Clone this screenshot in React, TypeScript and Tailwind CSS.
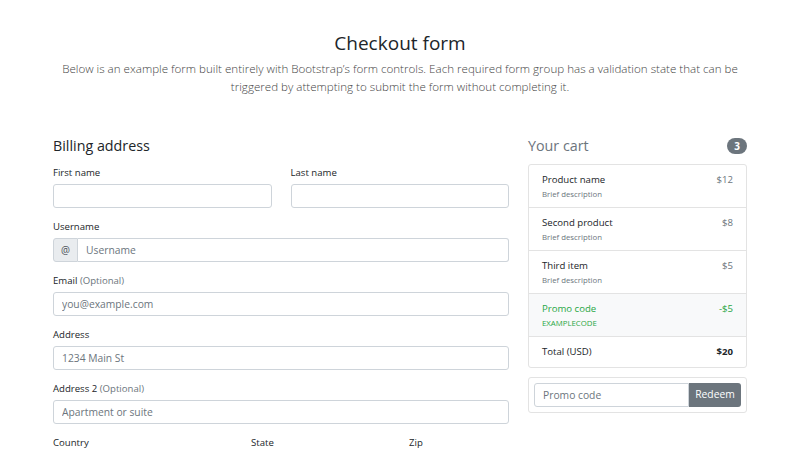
import React from "react";

const font = { fontFamily: '"Open Sans", "Noto Sans", sans-serif' };

function Field({
  label,
  optional,
  placeholder,
  className = "",
}: {
  label: string;
  optional?: boolean;
  placeholder?: string;
  className?: string;
}) {
  return (
    <div className={"mb-[11px] " + className}>
      <label className="mb-[4px] block text-[9.6px] leading-[15px] text-[#212529]">
        {label}
        {optional && <span className="text-[#6c757d]"> (Optional)</span>}
      </label>
      <input
        placeholder={placeholder}
        className="block h-[24px] w-full rounded-[3px] border border-[#ced4da] bg-white px-[8px] text-[10.3px] text-[#495057] placeholder:text-[#6c757d] focus:outline-none"
      />
    </div>
  );
}

const items = [
  { name: "Product name", desc: "Brief description", price: "$12" },
  { name: "Second product", desc: "Brief description", price: "$8" },
  { name: "Third item", desc: "Brief description", price: "$5" },
];

export default function App() {
  return (
    <div className="h-[450px] w-[800px] overflow-hidden bg-white text-[#212529]" style={font}>
      <div className="mx-auto w-[694px]">
        <div className="pt-[28px] text-center">
          <h2 className="text-[19px] leading-[30px] text-[#212529]">Checkout form</h2>
          <p className="mt-[2px] text-[11.6px] font-light leading-[18px] text-[#444]">
            Below is an example form built entirely with Bootstrap’s form controls. Each required form group has a
            validation state that can be triggered by attempting to submit the form without completing it.
          </p>
        </div>

        <div className="mt-[40px] flex gap-[19px]">
          <div className="w-[456px]">
            <h4 className="mb-[9px] text-[14.3px] leading-[20px]">Billing address</h4>
            <div className="flex gap-[19px]">
              <Field label="First name" className="flex-1" />
              <Field label="Last name" className="flex-1" />
            </div>
            <div className="mb-[11px]">
              <label className="mb-[4px] block text-[9.6px] leading-[15px]">Username</label>
              <div className="flex h-[24px]">
                <span className="flex w-[25px] items-center justify-center rounded-l-[3px] border border-[#ced4da] bg-[#e9ecef] text-[10px] text-[#495057]">
                  @
                </span>
                <input
                  placeholder="Username"
                  className="h-full flex-1 rounded-r-[3px] border border-l-0 border-[#ced4da] px-[8px] text-[10.3px] placeholder:text-[#6c757d] focus:outline-none"
                />
              </div>
            </div>
            <Field label="Email" optional placeholder="you@example.com" />
            <Field label="Address" placeholder="1234 Main St" />
            <Field label="Address 2" optional placeholder="Apartment or suite" />
            <div className="flex text-[9.6px] leading-[15px]">
              <label className="w-[198px]">Country</label>
              <label className="w-[158px]">State</label>
              <label>Zip</label>
            </div>
          </div>

          <div className="w-[219px]">
            <div className="mb-[8px] flex h-[20px] items-center justify-between">
              <h4 className="text-[14.3px] leading-[20px] text-[#6c757d]">Your cart</h4>
              <span className="flex h-[16px] w-[20px] items-center justify-center rounded-full bg-[#6c757d] text-[10px] font-bold text-white">
                3
              </span>
            </div>
            <ul className="rounded-[3px] border border-[#e3e3e3]">
              {items.map((it) => (
                <li
                  key={it.name}
                  className="flex h-[43px] justify-between border-b border-[#e3e3e3] px-[13px] pt-[8px]"
                >
                  <div>
                    <div className="text-[9.6px] leading-[14px]">{it.name}</div>
                    <div className="text-[7.8px] leading-[14px] text-[#6c757d]">{it.desc}</div>
                  </div>
                  <span className="text-[9.6px] leading-[14px] text-[#6c757d]">{it.price}</span>
                </li>
              ))}
              <li className="flex h-[43px] justify-between border-b border-[#e3e3e3] bg-[#f8f9fa] px-[13px] pt-[8px] text-[#28a745]">
                <div>
                  <div className="text-[9.6px] leading-[14px]">Promo code</div>
                  <div className="text-[7.8px] leading-[14px]">EXAMPLECODE</div>
                </div>
                <span className="text-[9.6px] leading-[14px]">-$5</span>
              </li>
              <li className="flex h-[30px] items-center justify-between px-[13px] text-[9.6px]">
                <span>Total (USD)</span>
                <strong>$20</strong>
              </li>
            </ul>

            <div className="mt-[9px] flex rounded-[3px] border border-[#e3e3e3] p-[5px]">
              <input
                placeholder="Promo code"
                className="h-[24px] min-w-0 flex-1 rounded-l-[3px] border border-[#ced4da] px-[8px] text-[10.3px] placeholder:text-[#6c757d] focus:outline-none"
              />
              <button className="h-[24px] w-[52px] rounded-r-[3px] bg-[#6c757d] text-[10.3px] text-white">
                Redeem
              </button>
            </div>
          </div>
        </div>
      </div>
    </div>
  );
}
